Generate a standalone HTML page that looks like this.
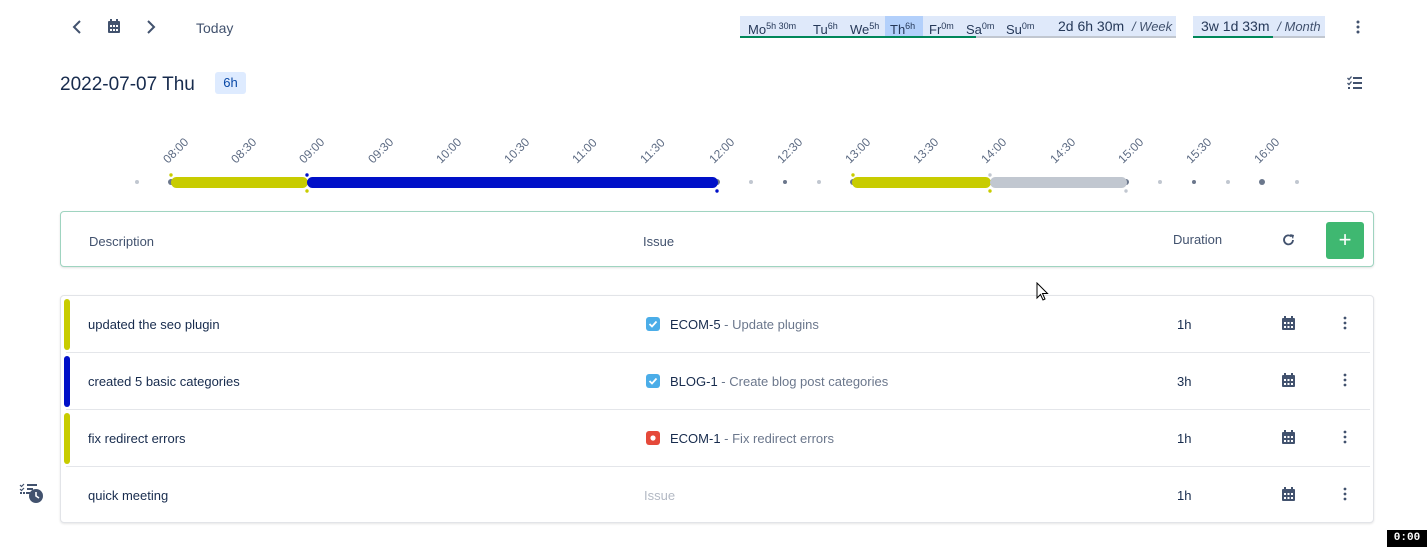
<!DOCTYPE html>
<html><head><meta charset="utf-8"><style>
*{box-sizing:border-box;margin:0;padding:0}
body{width:1427px;height:547px;background:#fff;font-family:"Liberation Sans",sans-serif;color:#172b4d;position:relative;overflow:hidden}
.abs{position:absolute}
.wk{position:absolute;top:16px;height:22px;background:#dfe9fa;font-size:13px;color:#253858;white-space:nowrap}
.wk span{position:absolute;top:0;height:20px;line-height:21px}
.wk sup{font-size:9px;vertical-align:5px}
.card{position:absolute;left:60px;width:1314px;background:#fff;border-radius:4px}
.row{position:absolute;left:0;width:1314px;height:57px;font-size:13px}
.row .bar{position:absolute;left:3px;top:3px;width:6px;height:51px;border-radius:3px}
.row .d{position:absolute;left:27px;top:21px}
.row .i{position:absolute;left:586px;top:21px;color:#6b778c}
.row .i b{font-weight:normal;color:#172b4d}
.row .du{position:absolute;left:1116px;top:21px}
.ic{position:absolute;left:-1px;top:0px;width:14px;height:14px;border-radius:3px}
.sep{position:absolute;left:5px;right:5px;bottom:0;height:1px;background:#e4e6ea}
</style></head><body>
<svg class="abs" style="left:70px;top:19px" width="14" height="16" viewBox="0 0 14 16"><path d="M10 2 L4 8 L10 14" stroke="#42526e" stroke-width="2" fill="none"/></svg>
<svg class="abs" style="left:107px;top:19px" width="14" height="15" viewBox="0 0 14 15"><rect x="1" y="2" width="12" height="12" rx="1" fill="#42526e"/><rect x="3" y="0" width="2" height="3" fill="#42526e"/><rect x="9" y="0" width="2" height="3" fill="#42526e"/><g fill="#fff"><rect x="3" y="6" width="2" height="2"/><rect x="6" y="6" width="2" height="2"/><rect x="9" y="6" width="2" height="2"/><rect x="3" y="10" width="2" height="2"/><rect x="6" y="10" width="2" height="2"/><rect x="9" y="10" width="2" height="2"/></g></svg>
<svg class="abs" style="left:144px;top:19px" width="14" height="16" viewBox="0 0 14 16"><path d="M4 2 L10 8 L4 14" stroke="#42526e" stroke-width="2" fill="none"/></svg>
<div class="abs" style="left:196px;top:20px;font-size:14px;color:#42526e">Today</div>

<div class="wk" style="left:740px;width:436px">
 <div class="abs" style="left:145px;top:0;width:38px;height:20px;background:#b3d0fb"></div>
 <span style="left:8px">Mo<sup>5h 30m</sup></span><span style="left:73px">Tu<sup>6h</sup></span><span style="left:110px">We<sup>5h</sup></span><span style="left:150px">Th<sup>6h</sup></span><span style="left:189px">Fr<sup>0m</sup></span><span style="left:226px">Sa<sup>0m</sup></span><span style="left:266px">Su<sup>0m</sup></span><span style="left:318px;font-size:14px">2d 6h 30m &nbsp;<i style="color:#42526e;font-size:13px">/ Week</i></span>
 <div class="abs" style="left:0;bottom:0;height:2px;width:236px;background:#00875a"></div><div class="abs" style="left:236px;bottom:0;height:2px;right:0;background:#c1c7d0"></div>
</div>
<div class="wk" style="left:1193px;width:132px"><span style="left:8px;font-size:14px">3w 1d 33m &nbsp;<i style="color:#42526e;font-size:13px">/ Month</i></span>
 <div class="abs" style="left:0;bottom:0;height:2px;width:80px;background:#00875a"></div><div class="abs" style="left:80px;bottom:0;height:2px;right:0;background:#c1c7d0"></div></div>
<svg class="abs" style="left:1355px;top:19px" width="6" height="16"><circle cx="3" cy="3" r="1.5" fill="#42526e"/><circle cx="3" cy="8" r="1.5" fill="#42526e"/><circle cx="3" cy="13" r="1.5" fill="#42526e"/></svg>

<div class="abs" style="left:60px;top:74px;font-size:19px;color:#172b4d">2022-07-07 Thu</div>
<div class="abs" style="left:215px;top:72px;width:31px;height:22px;background:#deebff;border-radius:3px;color:#0747a6;font-size:13px;text-align:center;line-height:22px">6h</div>
<svg class="abs" style="left:1347px;top:76px" width="16" height="14"><g fill="#42526e"><rect x="6" y="1" width="9" height="2"/><rect x="6" y="6" width="9" height="2"/><rect x="6" y="11" width="9" height="2"/><path d="M0.5 2 L2 3.5 L4.5 0.5" stroke="#42526e" stroke-width="1.3" fill="none"/><path d="M0.5 7 L2 8.5 L4.5 5.5" stroke="#42526e" stroke-width="1.3" fill="none"/><rect x="1" y="11" width="2" height="2"/></g></svg>

<svg class="abs" style="left:0;top:120px" width="1427" height="80" viewBox="0 120 1427 80" font-family="Liberation Sans" font-size="12" fill="#5e6c84">
<g>
<text transform="translate(168,164) rotate(-45)">08:00</text>
<text transform="translate(236,164) rotate(-45)">08:30</text>
<text transform="translate(304,164) rotate(-45)">09:00</text>
<text transform="translate(373,164) rotate(-45)">09:30</text>
<text transform="translate(441,164) rotate(-45)">10:00</text>
<text transform="translate(509,164) rotate(-45)">10:30</text>
<text transform="translate(577,164) rotate(-45)">11:00</text>
<text transform="translate(645,164) rotate(-45)">11:30</text>
<text transform="translate(714,164) rotate(-45)">12:00</text>
<text transform="translate(782,164) rotate(-45)">12:30</text>
<text transform="translate(850,164) rotate(-45)">13:00</text>
<text transform="translate(918,164) rotate(-45)">13:30</text>
<text transform="translate(986,164) rotate(-45)">14:00</text>
<text transform="translate(1055,164) rotate(-45)">14:30</text>
<text transform="translate(1123,164) rotate(-45)">15:00</text>
<text transform="translate(1191,164) rotate(-45)">15:30</text>
<text transform="translate(1259,164) rotate(-45)">16:00</text>
</g>
<g fill="#c1c7d0"><circle cx="137" cy="182" r="2"/><circle cx="751" cy="182" r="2"/><circle cx="819" cy="182" r="2"/><circle cx="1160" cy="182" r="2"/><circle cx="1228" cy="182" r="2"/><circle cx="1297" cy="182" r="2"/></g>
<g fill="#6b778c"><circle cx="171" cy="182" r="3"/><circle cx="785" cy="182" r="2"/><circle cx="1194" cy="182" r="2"/><circle cx="1262" cy="182" r="3"/><circle cx="717" cy="182" r="3"/><circle cx="853" cy="182" r="3"/><circle cx="1126" cy="182" r="3"/></g>
<rect x="171" y="177" width="137" height="11" rx="5.5" fill="#c8cc00"/>
<rect x="307" y="177" width="411" height="11" rx="5.5" fill="#0010c8"/>
<rect x="852" y="177" width="139" height="11" rx="5.5" fill="#c8cc00"/>
<rect x="990" y="177" width="137" height="11" rx="5.5" fill="#c1c7d0"/>
<circle cx="171" cy="175" r="1.7" fill="#c8cc00"/><circle cx="307" cy="175" r="1.7" fill="#0010c8"/><circle cx="307" cy="191" r="1.7" fill="#c8cc00"/><circle cx="717" cy="191" r="1.7" fill="#0010c8"/>
<circle cx="853" cy="175" r="1.7" fill="#c8cc00"/><circle cx="990" cy="175" r="1.7" fill="#c1c7d0"/><circle cx="990" cy="191" r="1.7" fill="#c8cc00"/><circle cx="1126" cy="191" r="1.7" fill="#c1c7d0"/>
</svg>

<div class="card" style="top:211px;height:56px;border:1px solid #9fd4c0;box-shadow:0 1px 2px rgba(0,0,0,.12)">
 <div class="abs" style="left:28px;top:22px;font-size:13px;color:#42526e">Description</div>
 <div class="abs" style="left:582px;top:22px;font-size:13px;color:#42526e">Issue</div>
 <div class="abs" style="left:1112px;top:20px;font-size:13px;color:#42526e">Duration</div>
 <svg class="abs" style="left:1221px;top:21px" width="14" height="14" viewBox="0 0 14 14"><path d="M11 7 A4.5 4.5 0 1 1 9.5 3.5" stroke="#42526e" stroke-width="1.8" fill="none"/><path d="M8 1 L12 2 L11 6 Z" fill="#42526e"/></svg>
 <div class="abs" style="left:1265px;top:10px;width:38px;height:37px;background:#3fb871;border-radius:3px;color:#fff;font-size:22px;text-align:center;line-height:36px">+</div>
</div>

<div class="card" style="top:295px;height:228px;border:1px solid #e2e4e8;box-shadow:0 1px 2px rgba(0,0,0,.1)">
 <div class="row" style="top:0"><div class="bar" style="background:#c8cc00"></div><div class="d">updated the seo plugin</div>
  <div class="i"><div class="ic" style="background:#4bade8"><svg width="14" height="14"><path d="M3.5 7 L6 9.5 L10.5 4.5" stroke="#fff" stroke-width="1.8" fill="none"/></svg></div><span style="margin-left:23px"><b>ECOM-5</b> - Update plugins</span></div>
  <div class="du">1h</div><div class="sep"></div></div>
 <div class="row" style="top:57px"><div class="bar" style="background:#0010c8"></div><div class="d">created 5 basic categories</div>
  <div class="i"><div class="ic" style="background:#4bade8"><svg width="14" height="14"><path d="M3.5 7 L6 9.5 L10.5 4.5" stroke="#fff" stroke-width="1.8" fill="none"/></svg></div><span style="margin-left:23px"><b>BLOG-1</b> - Create blog post categories</span></div>
  <div class="du">3h</div><div class="sep"></div></div>
 <div class="row" style="top:114px"><div class="bar" style="background:#c8cc00"></div><div class="d">fix redirect errors</div>
  <div class="i"><div class="ic" style="background:#e5493a"><svg width="14" height="14"><circle cx="7" cy="7" r="2.6" fill="#fff"/></svg></div><span style="margin-left:23px"><b>ECOM-1</b> - Fix redirect errors</span></div>
  <div class="du">1h</div><div class="sep"></div></div>
 <div class="row" style="top:171px"><div class="d">quick meeting</div>
  <div class="i" style="color:#b3b9c4;left:583px">Issue</div>
  <div class="du">1h</div></div>
</div>
<svg width="0" height="0" style="position:absolute"><defs><g id="cal"><rect x="0" y="2" width="13" height="12" rx="1" fill="#42526e"/><rect x="2" y="0" width="2" height="3" fill="#42526e"/><rect x="9" y="0" width="2" height="3" fill="#42526e"/><g fill="#fff"><rect x="2" y="6" width="2" height="2"/><rect x="5.5" y="6" width="2" height="2"/><rect x="9" y="6" width="2" height="2"/><rect x="2" y="10" width="2" height="2"/><rect x="5.5" y="10" width="2" height="2"/><rect x="9" y="10" width="2" height="2"/></g></g><g id="dots"><circle cx="2" cy="2" r="1.4" fill="#42526e"/><circle cx="2" cy="7" r="1.4" fill="#42526e"/><circle cx="2" cy="12" r="1.4" fill="#42526e"/></g></defs></svg>
<svg class="abs" style="left:1282px;top:316px" width="13" height="14"><use href="#cal"/></svg>
<svg class="abs" style="left:1282px;top:373px" width="13" height="14"><use href="#cal"/></svg>
<svg class="abs" style="left:1282px;top:430px" width="13" height="14"><use href="#cal"/></svg>
<svg class="abs" style="left:1282px;top:487px" width="13" height="14"><use href="#cal"/></svg>
<svg class="abs" style="left:1343px;top:316px" width="4" height="14"><use href="#dots"/></svg>
<svg class="abs" style="left:1343px;top:373px" width="4" height="14"><use href="#dots"/></svg>
<svg class="abs" style="left:1343px;top:430px" width="4" height="14"><use href="#dots"/></svg>
<svg class="abs" style="left:1343px;top:487px" width="4" height="14"><use href="#dots"/></svg>

<svg class="abs" style="left:19px;top:483px" width="26" height="22" viewBox="0 0 26 22"><g fill="#42526e"><rect x="8" y="1" width="10" height="2"/><rect x="8" y="5" width="6" height="2"/><rect x="7" y="9" width="4" height="2"/><path d="M1 2 L2.5 3.5 L5 1" stroke="#42526e" stroke-width="1.2" fill="none"/><path d="M1 6 L2.5 7.5 L5 5" stroke="#42526e" stroke-width="1.2" fill="none"/><rect x="1" y="9" width="2" height="2"/><rect x="4" y="9" width="2" height="2"/><circle cx="17" cy="13" r="7"/></g><path d="M17 9 V13 L20 15" stroke="#fff" stroke-width="1.6" fill="none"/></svg>

<svg class="abs" style="left:1036px;top:282px" width="14" height="20" viewBox="0 0 14 20"><path d="M1 1 L1 16 L4.5 12.5 L7 18 L9 17 L6.5 11.5 L11.5 11.5 Z" fill="#fff" stroke="#000" stroke-width="1"/></svg>
<div class="abs" style="left:1387px;top:530px;width:40px;height:17px;background:#000;color:#fff;font-family:'Liberation Mono',monospace;font-size:11px;font-weight:bold;text-align:center;line-height:17px">0:00</div>
</body></html>
